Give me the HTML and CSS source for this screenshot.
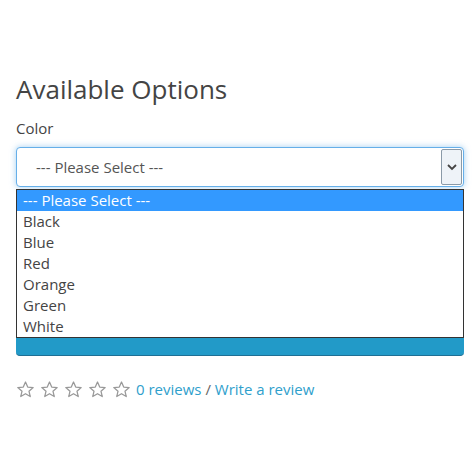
FILE: index.html
```html
<!DOCTYPE html>
<html>
<head>
<meta charset="utf-8">
<link rel="stylesheet" href="styles.css">
</head>
<body>
<div class="page">
  <h3 class="title">Available Options</h3>
  <div class="field">
    <label class="label">Color</label>
    <div class="select-wrap">
      <div class="select">
        <span class="select-text">--- Please Select ---</span>
        <span class="arrow">
          <svg width="12" height="8" viewBox="0 0 12 8"><path d="M2 2 L6 6 L10 2" fill="none" stroke="#444" stroke-width="1.8"/></svg>
        </span>
      </div>
      <div class="button-row">
        <div class="button"></div>
        <ul class="dropdown">
          <li class="opt active">--- Please Select ---</li>
          <li class="opt">Black</li>
          <li class="opt">Blue</li>
          <li class="opt">Red</li>
          <li class="opt">Orange</li>
          <li class="opt">Green</li>
          <li class="opt">White</li>
        </ul>
      </div>
    </div>
  </div>
  <div class="rating">
    <span class="stars">
      <svg class="star" viewBox="0 0 24 24"><path d="M12 2.5 L14.8 8.9 L21.7 9.5 L16.4 14.1 L18 20.9 L12 17.3 L6 20.9 L7.6 14.1 L2.3 9.5 L9.2 8.9 Z" fill="none" stroke="#999" stroke-width="1.6" stroke-linejoin="round"/></svg>
      <svg class="star" viewBox="0 0 24 24"><path d="M12 2.5 L14.8 8.9 L21.7 9.5 L16.4 14.1 L18 20.9 L12 17.3 L6 20.9 L7.6 14.1 L2.3 9.5 L9.2 8.9 Z" fill="none" stroke="#999" stroke-width="1.6" stroke-linejoin="round"/></svg>
      <svg class="star" viewBox="0 0 24 24"><path d="M12 2.5 L14.8 8.9 L21.7 9.5 L16.4 14.1 L18 20.9 L12 17.3 L6 20.9 L7.6 14.1 L2.3 9.5 L9.2 8.9 Z" fill="none" stroke="#999" stroke-width="1.6" stroke-linejoin="round"/></svg>
      <svg class="star" viewBox="0 0 24 24"><path d="M12 2.5 L14.8 8.9 L21.7 9.5 L16.4 14.1 L18 20.9 L12 17.3 L6 20.9 L7.6 14.1 L2.3 9.5 L9.2 8.9 Z" fill="none" stroke="#999" stroke-width="1.6" stroke-linejoin="round"/></svg>
      <svg class="star" viewBox="0 0 24 24"><path d="M12 2.5 L14.8 8.9 L21.7 9.5 L16.4 14.1 L18 20.9 L12 17.3 L6 20.9 L7.6 14.1 L2.3 9.5 L9.2 8.9 Z" fill="none" stroke="#999" stroke-width="1.6" stroke-linejoin="round"/></svg>
    </span>
    <a class="link" href="#">0 reviews</a><span class="sep"> / </span><a class="link" href="#">Write a review</a>
  </div>
</div>
</body>
</html>
```
FILE: styles.css
```css
html, body {
  margin: 0;
  padding: 0;
  background: #fff;
}
body {
  font-family: "Open Sans", "Liberation Sans", sans-serif;
  color: #444;
}
.page {
  padding: 73px 10px 0 16px;
}
.title {
  margin: 0;
  font-size: 26px;
  font-weight: 400;
  line-height: 32px;
  color: #444;
}
.field {
  margin-top: 13px;
}
.label {
  display: block;
  font-size: 15px;
  line-height: 20px;
  color: #444;
  margin-bottom: 9px;
}
.select-wrap {
  width: 448px;
}
.select {
  box-sizing: border-box;
  height: 40px;
  border: 1px solid #66afe9;
  border-radius: 4px;
  box-shadow: 0 0 6px rgba(102, 175, 233, 0.6);
  display: flex;
  align-items: center;
  justify-content: space-between;
  padding: 1px 1px 1px 19px;
  background: #fff;
}
.select-text {
  font-size: 15px;
  color: #555;
}
.arrow {
  box-sizing: border-box;
  width: 21px;
  height: 36px;
  border: 1px solid #8a9aa8;
  border-radius: 2px;
  background: #eef3f8;
  display: flex;
  align-items: center;
  justify-content: center;
}
.button-row {
  position: relative;
  margin-top: 2px;
  height: 167px;
}
.button {
  position: absolute;
  left: 0;
  right: 0;
  bottom: 0;
  height: 30px;
  background: #229ac8;
  border-radius: 0 0 4px 4px;
  border-bottom: 1px solid #1f6f94;
}
.dropdown {
  position: absolute;
  left: 0;
  right: 0;
  top: 0;
  margin: 0;
  padding: 0;
  list-style: none;
  border: 1px solid #333;
  background: #fff;
}
.opt {
  font-size: 15px;
  line-height: 21px;
  height: 21px;
  padding-left: 6px;
  color: #444;
}
.opt.active {
  background: #3399ff;
  color: #fff;
}
.rating {
  margin-top: 23px;
  display: flex;
  align-items: center;
  font-size: 15px;
}
.stars {
  display: flex;
  gap: 5px;
  margin-right: 5px;
}
.star {
  width: 19px;
  height: 19px;
  display: block;
}
.link {
  color: #2fa0cc;
  text-decoration: none;
}
.sep {
  color: #666;
  white-space: pre;
}
```
